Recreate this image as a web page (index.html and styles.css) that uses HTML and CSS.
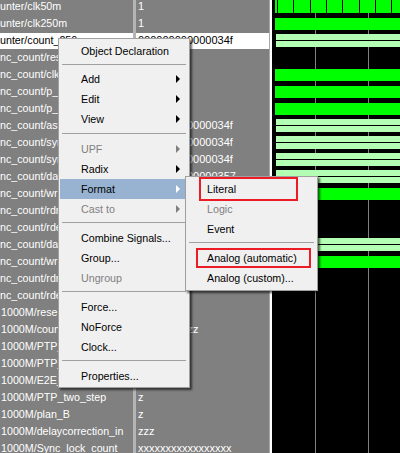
FILE: index.html
```html
<!DOCTYPE html>
<html lang="en">

<head>
    <meta charset="UTF-8">
    <title>Wave</title>
    <link rel="stylesheet" href="styles.css">
</head>

<body>
    <div class="viewer">
        <div class="col names">
            <div class="row">unter/clk50m</div>
            <div class="row">unter/clk250m</div>
            <div class="row selected">unter/count_250</div>
            <div class="row">nc_count/res</div>
            <div class="row">nc_count/clk</div>
            <div class="row">nc_count/p_</div>
            <div class="row">nc_count/p_</div>
            <div class="row">nc_count/ast</div>
            <div class="row">nc_count/syn</div>
            <div class="row">nc_count/syn</div>
            <div class="row">nc_count/da</div>
            <div class="row">nc_count/wr</div>
            <div class="row">nc_count/rdr</div>
            <div class="row">nc_count/rde</div>
            <div class="row">nc_count/da</div>
            <div class="row">nc_count/wr</div>
            <div class="row">nc_count/rdr</div>
            <div class="row">nc_count/rde</div>
            <div class="row wide">1000M/rese</div>
            <div class="row wide">1000M/coun</div>
            <div class="row wide">1000M/PTP_</div>
            <div class="row wide">1000M/PTP_</div>
            <div class="row wide">1000M/E2E_</div>
            <div class="row wide">1000M/PTP_two_step</div>
            <div class="row wide">1000M/plan_B</div>
            <div class="row wide">1000M/delaycorrection_in</div>
            <div class="row wide">1000M/Sync_lock_count</div>
        </div>
        <div class="split"></div>
        <div class="col values">
            <div class="row">1</div>
            <div class="row">1</div>
            <div class="row selected">000000000000034f</div>
            <div class="row"></div>
            <div class="row"></div>
            <div class="row"></div>
            <div class="row"></div>
            <div class="row">000000000000034f</div>
            <div class="row">000000000000034f</div>
            <div class="row">000000000000034f</div>
            <div class="row">0000000000000357</div>
            <div class="row"></div>
            <div class="row"></div>
            <div class="row"></div>
            <div class="row"></div>
            <div class="row"></div>
            <div class="row"></div>
            <div class="row"></div>
            <div class="row"></div>
            <div class="row">zzzzzzzzzzz</div>
            <div class="row"></div>
            <div class="row"></div>
            <div class="row"></div>
            <div class="row">z</div>
            <div class="row">z</div>
            <div class="row">zzz</div>
            <div class="row">xxxxxxxxxxxxxxxxx</div>
        </div>
        <div class="split-white"></div>
        <div class="wave">
            <div class="track">
                <svg class="clock" width="125" height="13">
                    <rect width="125" height="13" fill="#00ff00" />
                    <path d="M2.5 0V13M18.5 0V13M35.5 0V13M51.5 0V13M67.5 0V13M84.5 0V13M100.5 0V13M116.5 0V13" stroke="#000" />
                </svg>
            </div>
            <div class="track"><div class="bar"></div></div>
            <div class="track"><div class="bus"></div></div>
            <div class="track"></div>
            <div class="track"><div class="bar"></div></div>
            <div class="track"><div class="bar"></div></div>
            <div class="track"><div class="bar"></div></div>
            <div class="track"><div class="bus"></div></div>
            <div class="track"><div class="bus"></div></div>
            <div class="track"><div class="bus"></div></div>
            <div class="track"><div class="bus"></div></div>
            <div class="track"><div class="bar"></div></div>
            <div class="track"></div>
            <div class="track"></div>
            <div class="track"><div class="bus"></div></div>
            <div class="track"><div class="bar"></div></div>
        </div>
    </div>

    <div class="menu main-menu">
        <div class="item">Object Declaration</div>
        <div class="sep sep-first"></div>
        <div class="item">Add<i class="arrow"></i></div>
        <div class="item">Edit<i class="arrow"></i></div>
        <div class="item">View<i class="arrow"></i></div>
        <div class="sep sep-second"></div>
        <div class="item disabled">UPF<i class="arrow"></i></div>
        <div class="item">Radix<i class="arrow"></i></div>
        <div class="item active">Format<i class="arrow"></i></div>
        <div class="item disabled">Cast to<i class="arrow"></i></div>
        <div class="sep"></div>
        <div class="item">Combine Signals...</div>
        <div class="item">Group...</div>
        <div class="item disabled">Ungroup</div>
        <div class="sep"></div>
        <div class="item">Force...</div>
        <div class="item">NoForce</div>
        <div class="item">Clock...</div>
        <div class="sep"></div>
        <div class="item">Properties...</div>
    </div>

    <div class="menu sub-menu">
        <div class="item">Literal</div>
        <div class="item disabled">Logic</div>
        <div class="item">Event</div>
        <div class="sep"></div>
        <div class="item">Analog (automatic)</div>
        <div class="item">Analog (custom)...</div>
        <span class="mark mark-literal"></span>
        <span class="mark mark-analog"></span>
    </div>
</body>

</html>
```

FILE: styles.css
```css
body {
    margin: 0;
    width: 400px;
    height: 453px;
    overflow: hidden;
    position: relative;
    background-color: #000;
    font-family: 'Liberation Sans', sans-serif;
    font-size: 10.7px;
}

.viewer {
    display: flex;
    height: 453px;
}

.col {
    width: 133px;
    margin-top: -1px;
    padding-bottom: 1px;
    background-color: #808080;
    color: #fff;
    overflow: hidden;
}

.row {
    height: 16px;
    line-height: 15px;
    margin-bottom: 1px;
    white-space: nowrap;
}

.wide {
    padding-left: 1px;
}

.values {
    font-size: 11px;
}

.values .row {
    padding-left: 2px;
}

.selected {
    background-color: #fff;
    color: #000;
}

.split {
    width: 3px;
    background-color: #b4b4b4;
}

.split-white {
    width: 3px;
    box-sizing: border-box;
    background-color: #fff;
    border-left: 1px solid #a8a8a8;
}

.wave {
    flex: 1;
    padding-left: 3px;
    background-color: #000;
    /* cursor lines sit behind the traces */
    background-image: linear-gradient(#808080, #808080), linear-gradient(#808080, #808080);
    background-size: 1px 100%;
    background-position: 43px 0, 96px 0;
    background-repeat: no-repeat;
}

.track {
    height: 17px;
}

.clock {
    display: block;
}

.bar {
    position: relative;
    top: 1px;
    height: 12px;
    background-color: #00ff00;
}

.bus {
    height: 6px;
    margin-left: 1px;
    padding-bottom: 1px;
    background-color: #b3ffb3;
    border-bottom: 6px solid #b3ffb3;
    background-clip: content-box;
    box-shadow: inset 0 -1px 0 #000;
}

/* context menus */
.menu {
    position: absolute;
    box-sizing: border-box;
    padding: 2px 1px;
    background-color: #f0f0f0;
    border: 1px solid #a0a0a0;
    box-shadow: 2px 2px 2px rgba(0, 0, 0, 0.6);
    color: #000;
}

.main-menu {
    left: 58px;
    top: 38px;
    width: 132px;
    height: 350px;
}

.sub-menu {
    left: 185px;
    top: 176px;
    width: 133px;
    height: 115px;
}

.item {
    display: flex;
    justify-content: space-between;
    align-items: center;
    height: 20px;
    padding: 0 8px 0 21px;
}

.sub-menu .item {
    padding-left: 20px;
}

.disabled {
    color: #808080;
}

.active {
    background-color: #98b3d1;
}

.arrow {
    width: 0;
    height: 0;
    border-left: 4px solid #000;
    border-top: 4px solid transparent;
    border-bottom: 4px solid transparent;
}

.disabled .arrow {
    border-left-color: #808080;
}

.active .arrow {
    border-left-color: #fff;
}

.sep {
    height: 1px;
    margin: 3px 2px 5px;
    background-color: #a0a0a0;
}

.sep-first {
    margin-bottom: 4px;
}

.sep-second {
    margin-top: 4px;
}

.mark {
    position: absolute;
    box-sizing: border-box;
    border: 2px solid #ed1c24;
}

.mark-literal {
    left: 13px;
    top: 0;
    width: 99px;
    height: 24px;
}

.mark-analog {
    left: 10px;
    top: 71px;
    width: 115px;
    height: 20px;
}
```
